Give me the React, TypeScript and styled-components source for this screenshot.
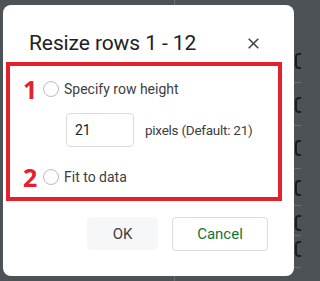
import styled, { createGlobalStyle } from 'styled-components';

const GlobalStyle = createGlobalStyle`
  html, body {
    margin: 0;
    padding: 0;
    background: #4d5257;
  }
  body {
    font-family: Roboto, "Liberation Sans", Arial, sans-serif;
  }
`;

// y offsets of the checkboxes peeking out on the right, relative to the page top
const sheetRows = [
  { box: 48, line: 77 },
  { box: 92, line: 120 },
  { box: 135, line: 163 },
  { box: 175, line: 200 },
  { box: 210, line: 230 },
  { box: 236, line: 262 },
];

const App = () => {
  let cursor = 0;
  return (
    <>
      <GlobalStyle />
      <Page>
        <Dialog role="dialog" aria-label="Resize rows 1 - 12">
          <Header>
            <Title>Resize rows 1 - 12</Title>
            <CloseButton aria-label="Close">
              <svg width="11" height="11" viewBox="0 0 11 11">
                <path d="M0.7 0.7 L10.3 10.3 M10.3 0.7 L0.7 10.3" stroke="#3c4043" strokeWidth="1.5" />
              </svg>
            </CloseButton>
          </Header>

          <Options>
            <OptionRow>
              <Num>1</Num>
              <Radio />
              <Label>Specify row height</Label>
            </OptionRow>
            <InputRow>
              <Field>21</Field>
              <Hint>pixels (Default: 21)</Hint>
            </InputRow>
            <OptionRow $gap={16}>
              <Num>2</Num>
              <Radio />
              <Label>Fit to data</Label>
            </OptionRow>
          </Options>

          <Actions>
            <Button>OK</Button>
            <Button $outlined>Cancel</Button>
          </Actions>
        </Dialog>

        <SheetEdge>
          {sheetRows.map((r, i) => {
            const boxGap = r.box - cursor;
            cursor = r.box + 16;
            const lineGap = r.line - cursor;
            cursor = r.line + 1;
            return (
              <SheetCell key={i}>
                <Check $gap={boxGap} />
                <GridLine $gap={lineGap} />
              </SheetCell>
            );
          })}
        </SheetEdge>
      </Page>
    </>
  );
};

const Page = styled.div`
  display: flex;
  width: 301px;
  height: 281px;
  box-sizing: border-box;
  padding: 5px 0 5px 3px;
  overflow: hidden;
  background: linear-gradient(to right, transparent 174px, #66706a 174px, #66706a 175px, transparent 175px),
    #4d5257;
`;

const Dialog = styled.div`
  width: 291px;
  height: 271px;
  flex-shrink: 0;
  box-sizing: border-box;
  background: #fff;
  border-radius: 8px;
  display: flex;
  flex-direction: column;
  padding-top: 24px;
`;

const Header = styled.div`
  display: flex;
  align-items: center;
  justify-content: space-between;
  padding: 0 29px 0 26px;
  height: 28px;
`;

const Title = styled.h2`
  margin: 0;
  font-family: Roboto, "Liberation Sans", Arial, sans-serif;
  font-weight: 400;
  font-size: 21px;
  line-height: 28px;
  color: #202124;
  letter-spacing: -0.1px;
`;

const CloseButton = styled.button`
  width: 24px;
  height: 24px;
  padding: 0;
  border: none;
  background: transparent;
  display: grid;
  place-items: center;
`;

const Options = styled.section`
  margin: 5px 12px 0 3px;
  border: 4px solid #e3202c;
  padding: 9px 0 6px;
  display: flex;
  flex-direction: column;
`;

const OptionRow = styled.div<{ $gap?: number }>`
  display: flex;
  align-items: center;
  height: 28px;
  padding-left: 13px;
  margin-top: ${(p) => p.$gap ?? 0}px;
`;

const Num = styled.span`
  width: 14px;
  text-align: right;
  font-family: "Open Sans", "DejaVu Sans", sans-serif;
  font-weight: 700;
  font-size: 25px;
  line-height: 28px;
  color: #e3202c;
`;

const Radio = styled.span`
  width: 16px;
  height: 16px;
  box-sizing: border-box;
  margin-left: 6px;
  border-radius: 50%;
  border: 1.5px solid #b9bcc0;
  background: #fff;
`;

const Label = styled.span`
  margin-left: 5px;
  font-size: 14px;
  color: #3c4043;
`;

const InputRow = styled.div`
  display: flex;
  align-items: center;
  margin: 10px 0 0 56px;
`;

const Field = styled.div`
  width: 68px;
  height: 34px;
  box-sizing: border-box;
  border: 1px solid #dadce0;
  border-radius: 4px;
  padding-left: 8px;
  display: flex;
  align-items: center;
  font-size: 14px;
  color: #202124;
`;

const Hint = styled.span`
  margin-left: 11px;
  font-size: 13.5px;
  letter-spacing: -0.25px;
  color: #3c4043;
`;

const Actions = styled.div`
  display: flex;
  justify-content: flex-end;
  gap: 14px;
  padding: 16px 26px 0 0;
`;

const Button = styled.button<{ $outlined?: boolean }>`
  height: ${(p) => (p.$outlined ? 34 : 33)}px;
  width: ${(p) => (p.$outlined ? 96 : 71)}px;
  box-sizing: border-box;
  border-radius: 4px;
  font-family: Roboto, "Liberation Sans", Arial, sans-serif;
  font-size: 15px;
  border: ${(p) => (p.$outlined ? '1px solid #dadce0' : 'none')};
  background: ${(p) => (p.$outlined ? '#fff' : '#f6f7f8')};
  color: ${(p) => (p.$outlined ? '#137333' : '#3c4043')};
  padding: 0;
`;

const SheetEdge = styled.div`
  flex: 1;
  display: flex;
  flex-direction: column;
`;

const SheetCell = styled.div`
  display: flex;
  flex-direction: column;
`;

const Check = styled.span<{ $gap: number }>`
  display: block;
  margin-top: ${(p) => p.$gap}px;
  height: 16px;
  width: 14px;
  box-sizing: border-box;
  border: 2px solid #1c1d1f;
  border-radius: 4px;
  margin-left: 1px;
`;

const GridLine = styled.span<{ $gap: number }>`
  display: block;
  margin-top: ${(p) => p.$gap}px;
  height: 1px;
  background: #66706a;
`;

export default App;
